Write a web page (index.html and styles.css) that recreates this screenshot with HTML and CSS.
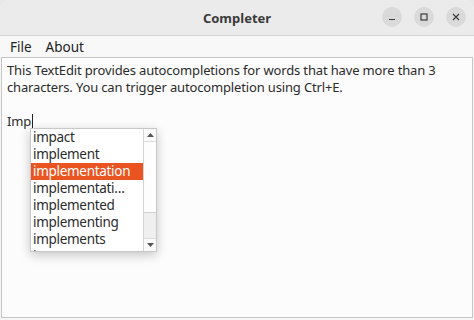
FILE: index.html
```html
<!DOCTYPE html>
<html lang="en">
<head>
    <meta charset="UTF-8">
    <title>Completer</title>
    <link rel="stylesheet" href="styles.css">
</head>
<body>
    <div class="window">
        <div class="titlebar">
            <span class="title">Completer</span>
            <div class="controls">
                <span class="ctl"><svg width="10" height="10" viewBox="0 0 10 10"><path d="M2 7.5h6" stroke="#3d3d3d" stroke-width="1.2"/></svg></span>
                <span class="ctl"><svg width="10" height="10" viewBox="0 0 10 10"><rect x="2" y="2" width="6" height="6" fill="none" stroke="#3d3d3d" stroke-width="1.2"/></svg></span>
                <span class="ctl"><svg width="10" height="10" viewBox="0 0 10 10"><path d="M2 2l6 6M8 2l-6 6" stroke="#3d3d3d" stroke-width="1.2"/></svg></span>
            </div>
        </div>
        <div class="menubar">
            <span class="menu">File</span>
            <span class="menu">About</span>
        </div>
        <div class="editor">
            <p class="line">This TextEdit provides autocompletions for words that have more than 3</p>
            <p class="line">characters. You can trigger autocompletion using Ctrl+E.</p>
            <p class="line">&nbsp;</p>
            <p class="line">Imp<span class="caret"></span></p>

            <div class="popup">
                <ul class="items">
                    <li>impact</li>
                    <li>implement</li>
                    <li class="selected">implementation</li>
                    <li>implementati…</li>
                    <li>implemented</li>
                    <li>implementing</li>
                    <li>implements</li>
                    <li class="peek">importance</li>
                </ul>
                <div class="scrollbar">
                    <span class="arrow"><svg width="7" height="4" viewBox="0 0 7 4"><path d="M0 4L3.5 0L7 4z" fill="#555"/></svg></span>
                    <span class="handle"></span>
                    <span class="track"></span>
                    <span class="arrow"><svg width="7" height="4" viewBox="0 0 7 4"><path d="M0 0L3.5 4L7 0z" fill="#555"/></svg></span>
                </div>
            </div>
        </div>
    </div>
</body>
</html>
```

FILE: styles.css
```css
html, body {
    margin: 0;
    padding: 0;
    background: #e8e8e8;
}

body {
    font-family: "Noto Sans", "DejaVu Sans", sans-serif;
    font-size: 13px;
    color: #2b2b2b;
}

.window {
    width: 474px;
    height: 320px;
    display: flex;
    flex-direction: column;
    background: #f7f7f7;
    border-radius: 10px 10px 0 0;
    overflow: hidden;
}

.titlebar {
    height: 35px;
    flex-shrink: 0;
    background: #ebebeb;
    border-bottom: 1px solid #d6d6d6;
    display: flex;
    align-items: center;
    justify-content: center;
    position: relative;
}

.title {
    font-weight: bold;
    font-size: 13px;
    color: #3a3a3a;
}

.controls {
    position: absolute;
    right: 8px;
    top: 7px;
    display: flex;
    gap: 12px;
}

.ctl {
    width: 20px;
    height: 20px;
    border-radius: 50%;
    background: #dadada;
    display: flex;
    align-items: center;
    justify-content: center;
}

.menubar {
    height: 21px;
    flex-shrink: 0;
    display: flex;
    align-items: center;
    padding: 0 0 0 10px;
    gap: 14px;
    background: #f8f8f8;
}

.menu {
    font-size: 13.5px;
    color: #222;
}

.editor {
    flex: 1;
    margin: 0 1px 2px 1px;
    border: 1px solid #c6c6c6;
    background: #fcfcfc;
    padding: 4px 5px;
    position: relative;
}

.line {
    margin: 0;
    height: 17px;
    line-height: 17px;
    letter-spacing: -0.15px;
    white-space: nowrap;
}

.caret {
    display: inline-block;
    width: 1px;
    height: 15px;
    background: #222;
    vertical-align: -3px;
    margin-left: 1px;
}

.popup {
    position: absolute;
    left: 28px;
    top: 70px;
    width: 125px;
    height: 122px;
    background: #fff;
    border: 1px solid #c8c8c8;
    box-shadow: 0 3px 10px rgba(0, 0, 0, 0.22);
    display: flex;
    overflow: hidden;
}

.items {
    list-style: none;
    margin: 0;
    padding: 0;
    flex: 1;
    overflow: hidden;
}

.items li {
    height: 17px;
    line-height: 17px;
    padding-left: 2px;
    font-size: 13.5px;
    letter-spacing: -0.3px;
    white-space: nowrap;
}

.items li.selected {
    background: #e95420;
    color: #fff;
}

.items li.peek {
    height: 3px;
    overflow: hidden;
}

.scrollbar {
    width: 12px;
    border-left: 1px solid #d4d4d4;
    display: flex;
    flex-direction: column;
    background: #f0f0f0;
}

.arrow {
    height: 12px;
    display: flex;
    align-items: center;
    justify-content: center;
    background: #fafafa;
}

.handle {
    height: 70px;
    background: #fdfdfd;
    border-top: 1px solid #dcdcdc;
    border-bottom: 1px solid #d0d0d0;
}

.track {
    flex: 1;
    background: #efefef;
    border-bottom: 1px solid #dcdcdc;
}
```
